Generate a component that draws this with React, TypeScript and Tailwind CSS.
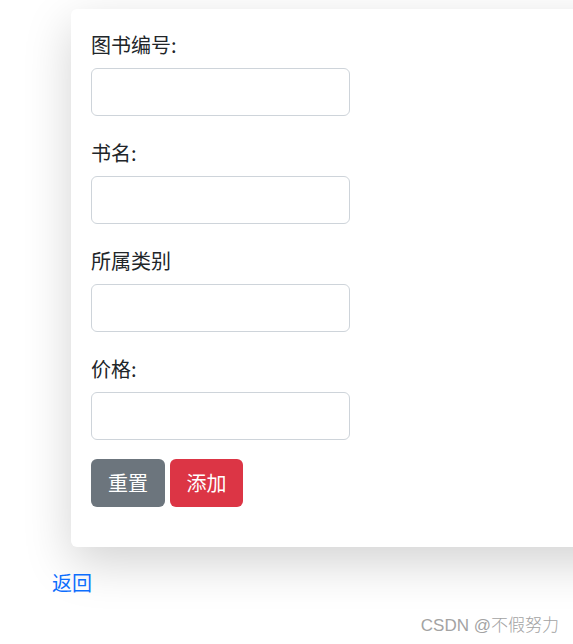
const fields = ['图书编号:', '书名:', '所属类别', '价格:'];

export default function App() {
  return (
    <div
      className="w-full min-h-[644px] overflow-hidden bg-white text-[#212529]"
      style={{ fontFamily: '"Noto Sans CJK SC", "Noto Sans", sans-serif' }}
    >
      <div className="pt-[9px] pl-[71px]">
        <div className="w-[560px] rounded-md bg-white pt-[21px] pb-[40px] pl-[20px] shadow-[0_1rem_3rem_rgba(0,0,0,0.175)]">
          <form className="flex flex-col">
            {fields.map((label, i) => (
              <div key={label} className={i < fields.length - 1 ? 'mb-[22px]' : ''}>
                <label className="mb-2 block text-[20px] leading-[30px]">{label}</label>
                <input
                  type="text"
                  className="block h-[48px] w-[259px] rounded-md border border-[#ced4da] bg-white px-4 text-[20px] outline-none"
                />
              </div>
            ))}
            <div className="mt-[19px] flex gap-[5px]">
              <button
                type="button"
                className="h-[48px] w-[74px] rounded-md bg-[#6c757d] text-[20px] leading-[30px] text-white"
              >
                重置
              </button>
              <button
                type="button"
                className="h-[48px] w-[73px] rounded-md bg-[#dc3545] text-[20px] leading-[30px] text-white"
              >
                添加
              </button>
            </div>
          </form>
        </div>
      </div>
      <div className="mt-[21px] pl-[52px]">
        <a href="#" className="text-[20px] leading-[30px] text-[#0d6efd]">
          返回
        </a>
      </div>
      <div
        className="mt-[16px] pr-[14px] text-right text-[17px] font-light leading-[24px] text-[#a3a3a3]"
        style={{ fontFamily: '"Liberation Sans", "Noto Sans CJK SC", sans-serif' }}
      >
        CSDN @不假努力
      </div>
    </div>
  );
}
